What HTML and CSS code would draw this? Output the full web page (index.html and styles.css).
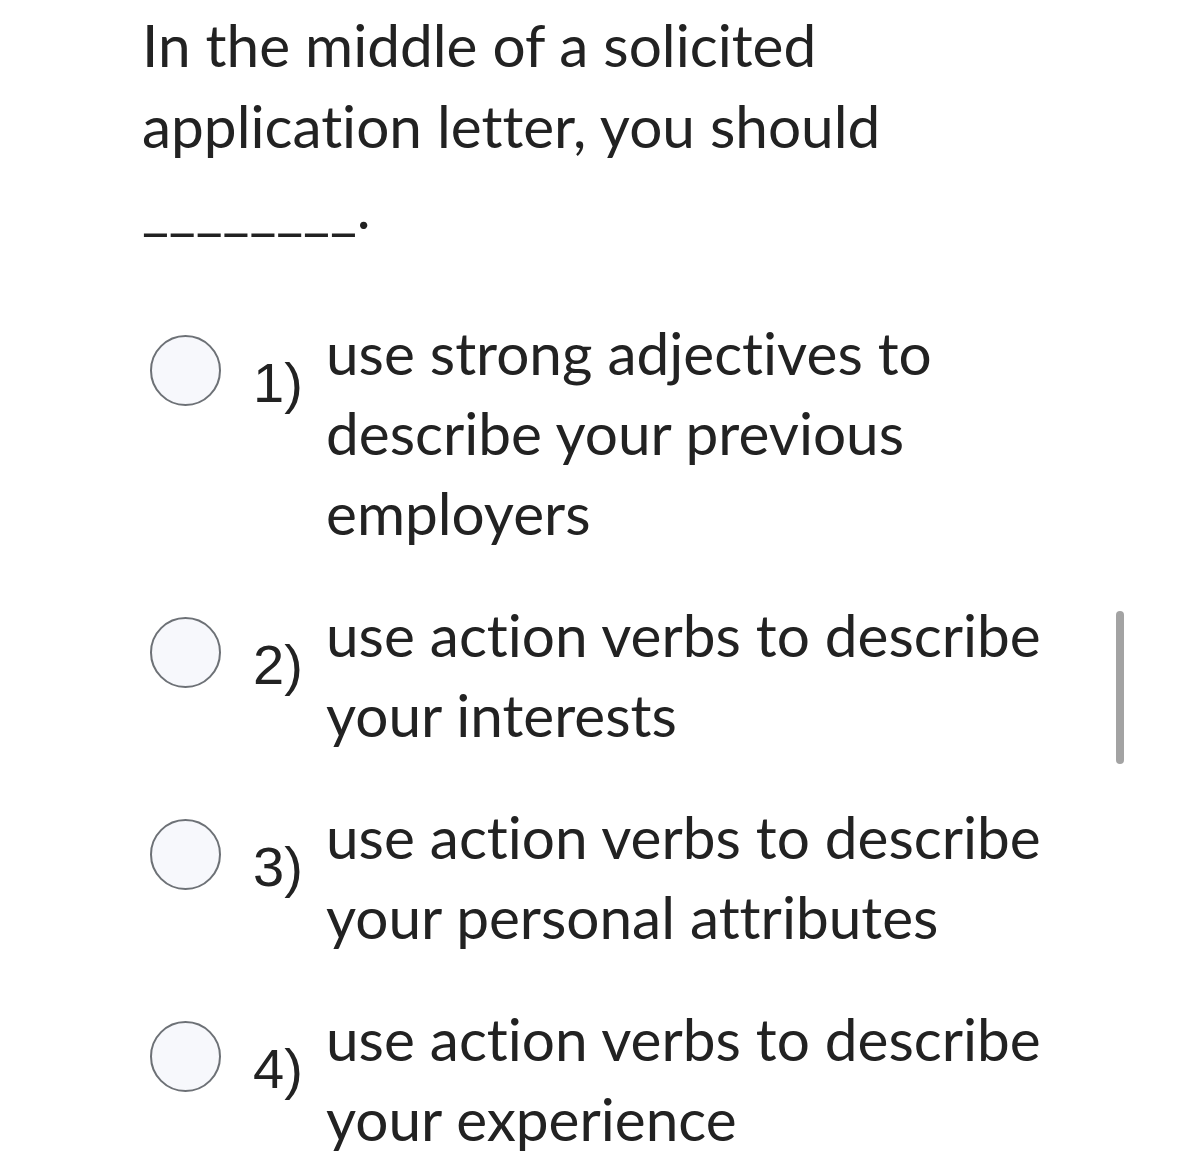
FILE: index.html
```html
<!DOCTYPE html>
<html lang="en">
<head>
<meta charset="utf-8">
<title>Question</title>
<link rel="stylesheet" href="styles.css">
</head>
<body>
<div class="page">
  <p class="question">In the middle of a solicited application letter, you should ________.</p>
  <ul class="options">
    <li class="option">
      <span class="radio"></span>
      <span class="num">1)</span>
      <span class="text">use strong adjectives to describe your previous employers</span>
    </li>
    <li class="option">
      <span class="radio"></span>
      <span class="num">2)</span>
      <span class="text">use action verbs to describe your interests</span>
    </li>
    <li class="option">
      <span class="radio"></span>
      <span class="num">3)</span>
      <span class="text">use action verbs to describe your personal attributes</span>
    </li>
    <li class="option">
      <span class="radio"></span>
      <span class="num">4)</span>
      <span class="text">use action verbs to describe your experience</span>
    </li>
  </ul>
</div>
<div class="scrollbar"></div>
</body>
</html>
```
FILE: styles.css
```css
html, body {
  margin: 0;
  padding: 0;
  background: #ffffff;
}
body {
  font-family: Lato, "Noto Sans", sans-serif;
  color: #222222;
  font-variant-ligatures: none;
}
.page {
  padding: 4px 0 0 142px;
}
.question {
  margin: 0;
  width: 850px;
  font-size: 58.5px;
  line-height: 81px;
}
.options {
  list-style: none;
  margin: 65px 0 0 0;
  padding: 0;
  display: flex;
  flex-direction: column;
  gap: 42px;
}
.option {
  display: flex;
  align-items: flex-start;
}
.radio {
  flex: none;
  box-sizing: border-box;
  width: 71px;
  height: 71px;
  margin: 23px 0 0 8px;
  border: 2.5px solid #6d7176;
  border-radius: 50%;
  background: #f7f8fc;
}
.num {
  flex: none;
  width: 73px;
  margin: 43px 0 0 32px;
  font-family: "Liberation Sans", Arial, sans-serif;
  font-size: 56px;
  line-height: 56px;
}
.text {
  width: 760px;
  font-size: 58.5px;
  line-height: 80px;
}
.scrollbar {
  position: fixed;
  left: 1116px;
  top: 611px;
  width: 8px;
  height: 153px;
  border-radius: 4px;
  background: #a3a3a3;
}
```
